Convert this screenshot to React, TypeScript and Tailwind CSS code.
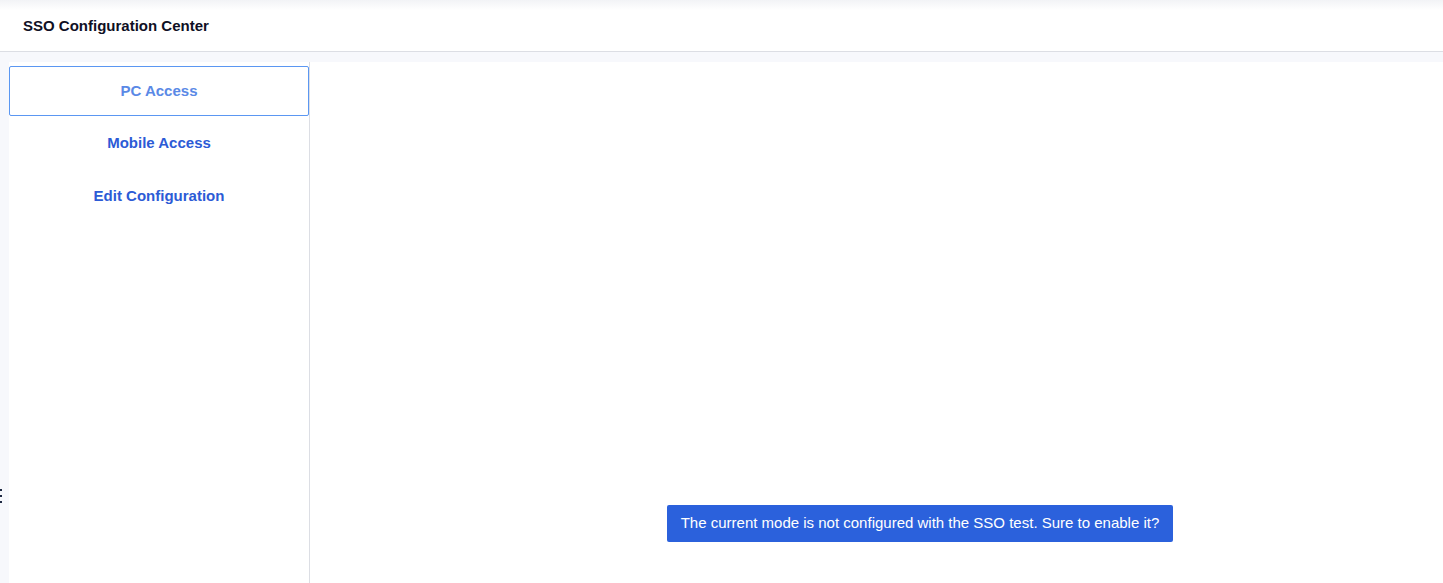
const items = [
  { label: "PC Access", active: true },
  { label: "Mobile Access", active: false },
  { label: "Edit Configuration", active: false },
];

export default function App() {
  return (
    <div
      className="h-[583px] flex flex-col bg-[#f7f8fc] overflow-hidden"
      style={{ fontFamily: '"Liberation Sans", Arial, sans-serif' }}
    >
      {/* top bar */}
      <header className="h-[52px] shrink-0 flex items-center px-[23px] border-b border-[#dcdee4] bg-gradient-to-b from-[#f2f3f6] to-white to-[20%]">
        <h1 className="text-[15px] font-bold text-[#0f1024] pt-[1px]">SSO Configuration Center</h1>
      </header>

      <div className="flex-1 flex pt-[10px] relative">
        {/* collapse handle */}
        <div className="absolute left-0 top-[437px] flex flex-col gap-[4px]">
          <span className="block w-[2px] h-[2px] bg-[#1f2a44]" />
          <span className="block w-[2px] h-[2px] bg-[#1f2a44]" />
          <span className="block w-[2px] h-[2px] bg-[#1f2a44]" />
        </div>

        <aside className="ml-[9px] w-[301px] shrink-0 bg-white border-r border-[#dcdee4] pt-[4px] flex flex-col gap-[2px]">
          {items.map((it, i) => (
            <button
              key={it.label}
              className={`h-[50px] w-[300px] flex items-center justify-center text-[15px] font-bold rounded-[2px] ${
                i === 2 ? "mt-[1px]" : ""
              } ${
                it.active
                  ? "border border-[#5b97f2] text-[#5a89e6]"
                  : "border border-transparent text-[#2c5bd6]"
              }`}
            >
              {it.label}
            </button>
          ))}
        </aside>

        <main className="flex-1 bg-white flex flex-col justify-end pb-[41px]">
          <div className="flex justify-center pl-[87px]">
            <button className="h-[37px] px-[14px] rounded-[2px] bg-[#2b61dc] text-white text-[15px]">
              The current mode is not configured with the SSO test. Sure to enable it?
            </button>
          </div>
        </main>
      </div>
    </div>
  );
}
